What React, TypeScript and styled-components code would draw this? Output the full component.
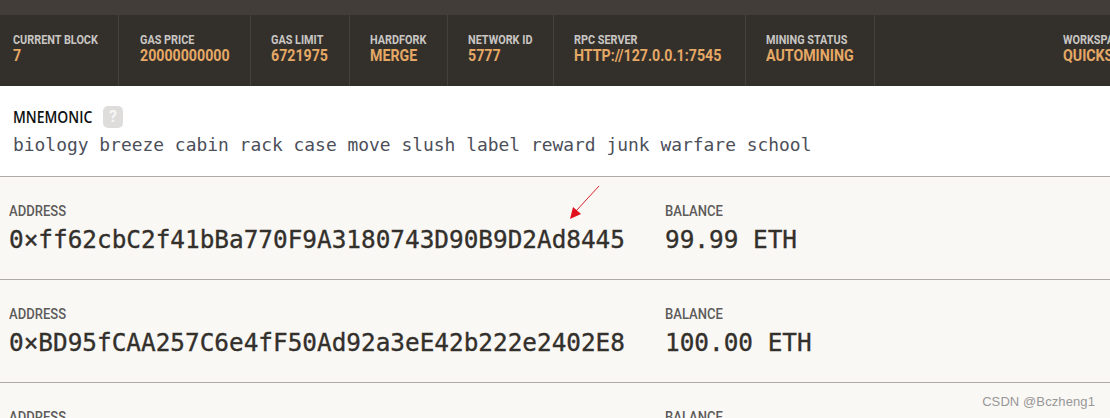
import React from 'react'
import styled, { createGlobalStyle } from 'styled-components'

const GlobalStyle = createGlobalStyle`
    html, body {
        margin: 0;
        padding: 0;
        background: #faf8f5;
    }
    body {
        width: 1110px;
        height: 418px;
        overflow: hidden;
        font-family: 'Roboto', 'Liberation Sans', sans-serif;
    }
`
const SPage = styled.div`
    position: relative;
    width: 1110px;
    height: 418px;
    overflow: hidden;
`
const STopBar = styled.div`
    height: 15px;
    background: #423d39;
`
const SStatusBar = styled.div`
    display: flex;
    height: 71px;
    background: #33302c;
`
const SStatusItem = styled.div<{ $width: number; $pad: number; $last?: boolean }>`
    flex-shrink: 0;
    box-sizing: border-box;
    width: ${(props) => props.$width}px;
    display: flex;
    flex-direction: column;
    justify-content: center;
    padding-left: ${(props) => props.$pad}px;
    padding-bottom: 4px;
    margin-left: ${(props) => (props.$last ? '168px' : '0')};
    border-right: ${(props) => (props.$last ? 'none' : '1px solid #45403b')};
    white-space: nowrap;
`
const SStatusLabel = styled.div`
    font-size: 13px;
    line-height: 14px;
    font-weight: 700;
    color: #c9c6c3;
    transform: scaleX(0.835);
    transform-origin: left center;
`
const SStatusValue = styled.div`
    font-size: 17px;
    line-height: 17px;
    font-weight: 700;
    color: #e5a865;
    transform: scaleX(0.835);
    transform-origin: left center;
`
const SMnemonic = styled.div`
    height: 90px;
    box-sizing: border-box;
    padding: 20px 13px 0;
    background: #fff;
`
const SMnemonicHead = styled.div`
    display: flex;
    align-items: center;
    gap: 10px;
    height: 22px;
`
const SMnemonicTitle = styled.div`
    width: 80px;
    font-family: 'Open Sans', sans-serif;
    font-size: 16px;
    font-weight: 600;
    color: #111;
    white-space: nowrap;
    transform: scaleX(0.87);
    transform-origin: left center;
`
const SHelpBadge = styled.div`
    width: 20px;
    height: 22px;
    border-radius: 5px;
    background: #dedddc;
    color: #f6f6f6;
    font-size: 16px;
    font-weight: 700;
    line-height: 22px;
    text-align: center;
`
const SWords = styled.div`
    margin-top: 6px;
    font-family: 'DejaVu Sans Mono', monospace;
    font-size: 17.93px;
    line-height: 22px;
    color: #4c4f5a;
    white-space: nowrap;
`
const SAccountRow = styled.div`
    display: flex;
    height: 103px;
    box-sizing: border-box;
    padding: 26px 9px 0;
    border-top: 1px solid #aeaba4;
    background: #faf8f5;
`
const SAddressCol = styled.div`
    width: 656px;
    flex-shrink: 0;
`
const SFieldLabel = styled.div`
    font-size: 15px;
    line-height: 16px;
    font-weight: 500;
    color: #5c5b59;
    transform: scaleX(0.87);
    transform-origin: left center;
`
const SFieldValue = styled.div`
    margin-top: 6px;
    min-height: 30px;
    font-family: 'DejaVu Sans Mono', monospace;
    font-size: 24.36px;
    line-height: 30px;
    color: #33302c;
    -webkit-text-stroke: 0.35px #33302c;
    white-space: nowrap;
`
const SArrow = styled.svg`
    position: absolute;
    left: 568px;
    top: 184px;
`
const SWatermark = styled.div`
    position: absolute;
    right: 15px;
    top: 394px;
    font-family: 'Liberation Sans', sans-serif;
    font-size: 13px;
    letter-spacing: 0.1px;
    color: #979797;
`

const stats = [
    { label: 'CURRENT BLOCK', value: '7', width: 119, pad: 13 },
    { label: 'GAS PRICE', value: '20000000000', width: 132, pad: 21 },
    { label: 'GAS LIMIT', value: '6721975', width: 99, pad: 20 },
    { label: 'HARDFORK', value: 'MERGE', width: 98, pad: 20 },
    { label: 'NETWORK ID', value: '5777', width: 106, pad: 20 },
    { label: 'RPC SERVER', value: 'HTTP://127.0.0.1:7545', width: 192, pad: 20 },
    { label: 'MINING STATUS', value: 'AUTOMINING', width: 129, pad: 20 },
    { label: 'WORKSPACE', value: 'QUICKSTART', width: 120, pad: 20 },
]

const accounts = [
    { address: '0×ff62cbC2f41bBa770F9A3180743D90B9D2Ad8445', balance: '99.99 ETH' },
    { address: '0×BD95fCAA257C6e4fF50Ad92a3eE42b222e2402E8', balance: '100.00 ETH' },
    { address: '', balance: '' },
]

const App: React.FC = () => {
    return (
        <SPage>
            <GlobalStyle />
            <STopBar />
            <SStatusBar>
                {stats.map((stat, index) => (
                    <SStatusItem
                        key={stat.label}
                        $width={stat.width}
                        $pad={stat.pad}
                        $last={index === stats.length - 1}
                    >
                        <SStatusLabel>{stat.label}</SStatusLabel>
                        <SStatusValue>{stat.value}</SStatusValue>
                    </SStatusItem>
                ))}
            </SStatusBar>
            <SMnemonic>
                <SMnemonicHead>
                    <SMnemonicTitle>MNEMONIC</SMnemonicTitle>
                    <SHelpBadge>?</SHelpBadge>
                </SMnemonicHead>
                <SWords>biology breeze cabin rack case move slush label reward junk warfare school</SWords>
            </SMnemonic>
            {accounts.map((account, index) => (
                <SAccountRow key={index}>
                    <SAddressCol>
                        <SFieldLabel>ADDRESS</SFieldLabel>
                        <SFieldValue>{account.address}</SFieldValue>
                    </SAddressCol>
                    <div>
                        <SFieldLabel>BALANCE</SFieldLabel>
                        <SFieldValue>{account.balance}</SFieldValue>
                    </div>
                </SAccountRow>
            ))}
            <SArrow width="34" height="36" viewBox="0 0 34 36">
                <line x1="31" y1="2" x2="8" y2="27" stroke="#d9222a" strokeWidth="1" />
                <polygon points="2,35 5,23 13,30" fill="#e2101c" />
            </SArrow>
            <SWatermark>CSDN @Bczheng1</SWatermark>
        </SPage>
    )
}

export default App
